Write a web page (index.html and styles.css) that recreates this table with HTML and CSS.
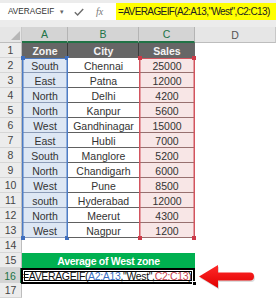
FILE: index.html
```html
<!DOCTYPE html>
<html>
<head>
<meta charset="utf-8">
<link rel="stylesheet" href="styles.css">
</head>
<body>
<div class="app">
  <div class="fbar">
    <div class="namebox"><span class="nb-text">AVERAGEIF</span><span class="nb-dd">▾</span></div>
    <div class="fb-icons">
      <svg class="ico-check" width="10" height="8" viewBox="0 0 10 8"><path d="M0.8 4.2 L3.6 6.9 L9.2 0.9" fill="none" stroke="#6d6d6d" stroke-width="1.4"/></svg>
      <span class="ico-fx">fx</span>
    </div>
    <div class="fb-formula">=AVERAGEIF(A2:A13,"West",C2:C13)</div>
  </div>

  <div class="sheet">
    <div class="row hdr">
      <div class="corner"><span class="tri"></span></div>
      <div class="ch sel">A</div><div class="ch sel">B</div><div class="ch sel">C</div><div class="ch">D</div>
    </div>

    <div class="row">
      <div class="rn">1</div>
      <div class="c th">Zone</div><div class="c th">City</div><div class="c th last">Sales</div><div class="c"></div>
    </div>

    <div class="row">
      <div class="rn">2</div>
      <div class="c za top">South<i class="h blue tl"></i><i class="h blue tr"></i></div>
      <div class="c zb">Chennai</div>
      <div class="c zc top">25000<i class="h red tl"></i><i class="h red tr"></i></div>
      <div class="c"></div>
    </div>
    <div class="row">
      <div class="rn">3</div>
      <div class="c za">East</div><div class="c zb">Patna</div><div class="c zc">12000</div><div class="c"></div>
    </div>
    <div class="row">
      <div class="rn">4</div>
      <div class="c za">North</div><div class="c zb">Delhi</div><div class="c zc">4200</div><div class="c"></div>
    </div>
    <div class="row">
      <div class="rn">5</div>
      <div class="c za">North</div><div class="c zb">Kanpur</div><div class="c zc">5600</div><div class="c"></div>
    </div>
    <div class="row">
      <div class="rn">6</div>
      <div class="c za">West</div><div class="c zb">Gandhinagar</div><div class="c zc">15000</div><div class="c"></div>
    </div>
    <div class="row">
      <div class="rn">7</div>
      <div class="c za">East</div><div class="c zb">Hubli</div><div class="c zc">7000</div><div class="c"></div>
    </div>
    <div class="row">
      <div class="rn">8</div>
      <div class="c za">South</div><div class="c zb">Manglore</div><div class="c zc">5200</div><div class="c"></div>
    </div>
    <div class="row">
      <div class="rn">9</div>
      <div class="c za">North</div><div class="c zb">Chandigarh</div><div class="c zc">6000</div><div class="c"></div>
    </div>
    <div class="row">
      <div class="rn">10</div>
      <div class="c za">West</div><div class="c zb">Pune</div><div class="c zc">8500</div><div class="c"></div>
    </div>
    <div class="row">
      <div class="rn">11</div>
      <div class="c za">south</div><div class="c zb">Hyderabad</div><div class="c zc">12000</div><div class="c"></div>
    </div>
    <div class="row">
      <div class="rn">12</div>
      <div class="c za">North</div><div class="c zb">Meerut</div><div class="c zc">4300</div><div class="c"></div>
    </div>
    <div class="row">
      <div class="rn">13</div>
      <div class="c za">West<i class="h blue bl"></i><i class="h blue br"></i></div>
      <div class="c zb">Nagpur</div>
      <div class="c zc">1200<i class="h red bl"></i><i class="h red br"></i></div>
      <div class="c"></div>
    </div>
    <div class="row">
      <div class="rn">14</div>
      <div class="c"></div><div class="c"></div><div class="c"></div><div class="c"></div>
    </div>
    <div class="row">
      <div class="rn">15</div>
      <div class="c green">Average of West zone</div><div class="c"></div>
    </div>
    <div class="row">
      <div class="rn act">16</div>
      <div class="c active"><span class="ftxt">=AVERAGEIF(<span class="ra">A2:A13</span>,"West",<span class="rc">C2:C13</span>)</span><i class="fill"></i></div>
      <div class="c"></div>
    </div>
    <div class="row">
      <div class="rn">17</div>
      <div class="c"></div><div class="c"></div><div class="c"></div><div class="c"></div>
    </div>
  </div>

  <svg class="arrow" width="62" height="30" viewBox="0 0 62 30">
    <defs>
      <linearGradient id="ag" x1="0" y1="0" x2="0" y2="1">
        <stop offset="0" stop-color="#ff2a2a"/>
        <stop offset="1" stop-color="#e00000"/>
      </linearGradient>
    </defs>
    <path d="M3 14.5 L22 3 L22 10.5 L54 10.5 A4 4 0 0 1 54 18.5 L22 18.5 L22 26 Z" fill="#9a9a9a" opacity="0.35" transform="translate(1,1.5)"/>
    <path d="M3 14.5 L22 3 L22 10.5 L54 10.5 A4 4 0 0 1 54 18.5 L22 18.5 L22 26 Z" fill="url(#ag)"/>
  </svg>
</div>
</body>
</html>
```

FILE: styles.css
```css
* { box-sizing: border-box; margin: 0; padding: 0; }
html, body { width: 276px; height: 300px; overflow: hidden; background: #fff; }
body { font-family: "Liberation Sans", Arial, sans-serif; color: #333; }

.app { position: relative; width: 276px; height: 300px; background: #fff; }

/* formula bar */
.fbar { height: 27px; background: #ececec; padding: 3px 0 7px; display: flex; }
.namebox { width: 72px; background: #fff; display: flex; align-items: center; padding-left: 8px; font-size: 8.2px; color: #333; }
.nb-dd { margin-left: 6px; font-size: 7px; color: #666; }
.fb-icons { width: 44px; background: #fff; display: flex; align-items: center; padding-left: 2px; gap: 12px; }
.ico-fx { font-family: "Liberation Serif", serif; font-style: italic; font-size: 10px; color: #777; }
.fb-formula { flex: 1; background: #ffff00; font-size: 10px; letter-spacing: -0.6px; line-height: 17px; padding-left: 2px; color: #222; white-space: nowrap; overflow: hidden; }

/* sheet */
.row { display: grid; grid-template-columns: 22px 46px 71px 56px 81px; height: 15px; }
.row.hdr { height: 16px; }

.corner { background: #e6e6e6; border-right: 1px solid #c8c8c8; border-bottom: 1px solid #bdbdbd; display: flex; justify-content: flex-end; align-items: flex-end; padding: 0 1px 2px 0; }
.tri { width: 0; height: 0; border-left: 9px solid transparent; border-bottom: 9px solid #b7b7b7; }

.ch { background: #e6e6e6; border-right: 1px solid #c8c8c8; border-bottom: 1px solid #bdbdbd; font-size: 10.5px; color: #555; display: flex; align-items: center; justify-content: center; }
.ch.sel { background: #d4d4d4; color: #217346; border-bottom: 2px solid #217346; border-right-color: #b4b4b4; }

.rn { background: #ececec; border-right: 1px solid #bdbdbd; border-bottom: 1px solid #d6d6d6; font-size: 10.5px; color: #444; display: flex; align-items: center; justify-content: center; }
.rn.act { background: #d4d4d4; color: #217346; border-right: 2px solid #217346; }

.c { position: relative; font-size: 10.5px; display: flex; align-items: center; justify-content: center; white-space: nowrap; color: #333; }

.th { background: #666; color: #f4f4f4; font-weight: bold; box-shadow: inset -1px 0 0 #3c3c3c; }
.th.last { box-shadow: none; }

.za { background: #dde7f4; box-shadow: inset 1.5px 0 0 #4d7cc4, inset -1.5px 0 0 #4d7cc4, inset 0 -1px 0 #8b9bb6; }
.za.top { box-shadow: inset 1.5px 0 0 #4d7cc4, inset -1.5px 0 0 #4d7cc4, inset 0 1px 0 #4d7cc4, inset 0 -1px 0 #8b9bb6; }
.zb { background: #fff; box-shadow: inset 0 -1px 0 #606060; }
.zc { background: #f8e6e6; box-shadow: inset 1.5px 0 0 #d2545e, inset -1.5px 0 0 #d2545e, inset 0 -1px 0 #97706f; }
.zc.top { box-shadow: inset 1.5px 0 0 #d2545e, inset -1.5px 0 0 #d2545e, inset 0 1px 0 #d2545e, inset 0 -1px 0 #97706f; }

.h { position: absolute; width: 4px; height: 4px; display: block; }
.h.blue { background: #3f6fbf; }
.h.red { background: #cc3a48; }
.h.tl { left: -1px; top: -2px; }
.h.tr { right: -1px; top: -2px; }
.h.bl { left: -1px; bottom: -2px; }
.h.br { right: -1px; bottom: -2px; }

.green { grid-column: 2 / 5; background: #00b050; color: #fff; font-weight: bold; letter-spacing: -0.3px; }

.active { grid-column: 2 / 5; margin-left: -1px; justify-content: flex-start; border: 2px solid #000; box-shadow: inset 0 0 0 1px #fff, inset 0 0 0 2px #000; overflow: visible; }
.ftxt { font-size: 10.5px; letter-spacing: -0.35px; color: #111; }
.ra { color: #3a6fc4; }
.rc { color: #c94550; }
.fill { position: absolute; right: -4px; bottom: -4px; width: 5px; height: 5px; background: #000; border: 1px solid #fff; display: block; }

.arrow { position: absolute; left: 196px; top: 262px; }
```
